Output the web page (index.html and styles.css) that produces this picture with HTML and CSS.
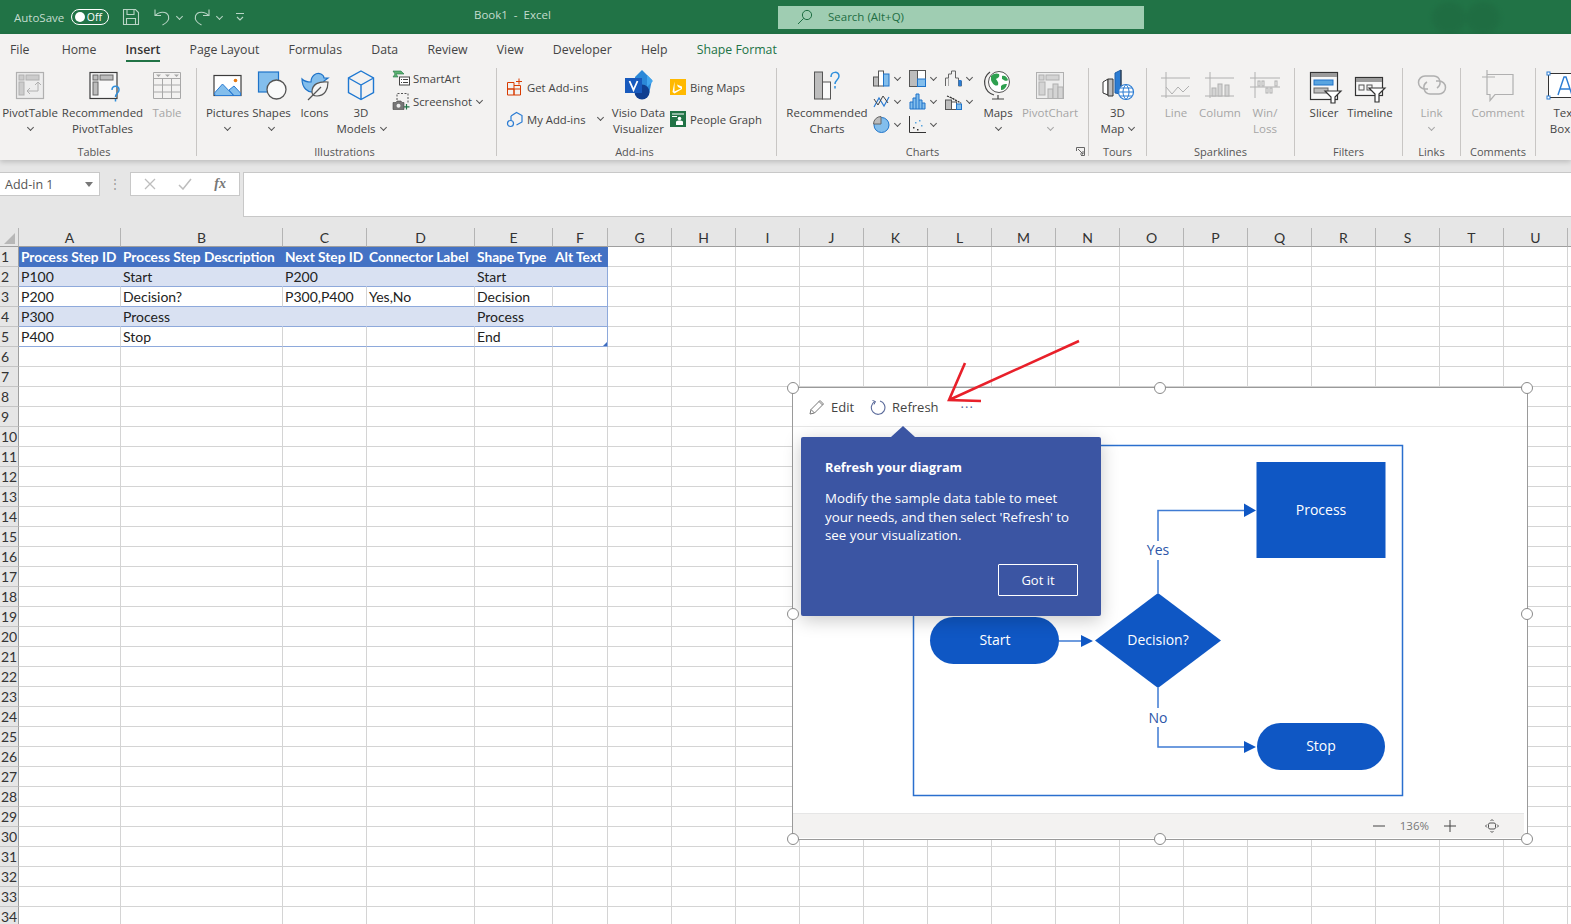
FILE: index.html
```html
<!DOCTYPE html>
<html>
  <head>
    <title>Book1 - Excel</title>
    <link rel="stylesheet" href="styles.css">
  </head>

  <body>
    <div class="titlebar">
      <span class="autosave">AutoSave</span>
      <span class="toggle"><i class="toggle-dot"></i>Off</span>
      <svg class="qat qat-save" width="18" height="18" viewBox="0 0 18 18"><path d="M1.5 1.5h12l3 3v12h-15zM5 1.5v5h7v-5M4.5 16.5v-6h9v6"/></svg>
      <svg class="qat qat-undo" width="18" height="18" viewBox="0 0 18 18"><path d="M2 1.5v6h6M2.5 7.5C6 3 14 3 15.5 8c1 4-2 7-6 9"/></svg>
      <i class="chev chev-title"></i>
      <svg class="qat qat-redo" width="18" height="18" viewBox="0 0 18 18"><path d="M16 1.5v6h-6M15.5 7.5C12 3 4 3 2.5 8c-1 4 2 7 6 9"/></svg>
      <i class="chev chev-title"></i>
      <svg class="qat qat-more" width="10" height="10" viewBox="0 0 10 10"><path d="M1 1.5h8M2 5l3 3 3-3"/></svg>
      <span class="doc-title">Book1&nbsp; -&nbsp; Excel</span>
      <div class="search">
        <svg width="16" height="16" viewBox="0 0 16 16"><circle cx="10" cy="6" r="4.6"/><path d="M6.7 9.3L1 15"/></svg>
        <span>Search (Alt+Q)</span>
      </div>
      <div class="profile"><i></i><i></i></div>
    </div>

    <div class="ribbon">
      <div class="tabs">
        <span class="tab tab-file">File</span>
        <span class="tab">Home</span>
        <span class="tab tab-active">Insert</span>
        <span class="tab">Page Layout</span>
        <span class="tab">Formulas</span>
        <span class="tab">Data</span>
        <span class="tab">Review</span>
        <span class="tab">View</span>
        <span class="tab">Developer</span>
        <span class="tab">Help</span>
        <span class="tab tab-shape">Shape Format</span>
      </div>

      <div class="groups">
        <section class="group group-tables">
          <div class="group-body">
            <div class="big">
              <svg width="32" height="32" viewBox="0 0 32 32"><rect x="2.5" y="3.5" width="27" height="26" fill="#ededed" stroke="#b0b0b0" stroke-width="1.2"/><g fill="#ccc" stroke="#b0b0b0"><rect x="5" y="6" width="5" height="5"/><rect x="12" y="6" width="13" height="5"/><rect x="5" y="13" width="5" height="13"/></g><path d="M24 13v9H13M21 16l3-3 3 3M16 19l-3 3 3 3" fill="none" stroke="#b0b0b0"/></svg>
              <span>PivotTable</span><i class="chev"></i>
            </div>
            <div class="big">
              <svg width="32" height="32" viewBox="0 0 32 32"><rect x="3" y="3.5" width="27" height="26" fill="#f8f8f8" stroke="#3c3c3c" stroke-width="1.2"/><g fill="#bdbdbd" stroke="#666"><rect x="6" y="6" width="5" height="5"/><rect x="13" y="6" width="13" height="5"/><rect x="6" y="13" width="5" height="13"/></g><path d="M25 21c0-5 7-5 7 0 0 3-3.5 3-3.5 7M28.5 30v2.5" fill="none" stroke="#2f8fdc" stroke-width="1.5"/></svg>
              <span>Recommended</span><span>PivotTables</span>
            </div>
            <div class="big off">
              <svg width="32" height="32" viewBox="0 0 32 32"><path d="M2.5 3.5h27v26h-27zM2.5 9.5h27M2.5 16h27M2.5 23h27M11.5 9.5v20M20.5 9.5v20" fill="none" stroke="#a8a8a8"/><path d="M5 5.5h5l-2.5 2.500zM14 5.500h5l-2.500 2.500zM23 5.500h5l-2.500 2.500z" fill="#a8a8a8"/></svg>
              <span>Table</span>
            </div>
          </div>
          <div class="group-label">Tables</div>
        </section>

        <section class="group group-illustrations">
          <div class="group-body">
            <div class="big">
              <svg width="32" height="32" viewBox="0 0 32 32"><rect x="2" y="6.5" width="27" height="20" fill="#fff" stroke="#3c3c3c" stroke-width="1.2"/><path d="M2.5 24l8-9 11 11.5H3zM17 21l5-4 6.500 7v2.500H22z" fill="#83beec" stroke="#2b7cd3"/><circle cx="23.5" cy="11.5" r="1.8" fill="#e8790f"/></svg>
              <span>Pictures</span><i class="chev"></i>
            </div>
            <div class="big">
              <svg width="32" height="32" viewBox="0 0 32 32"><rect x="2.5" y="3" width="20" height="20" fill="#83beec" stroke="#1e73c9" stroke-width="1.2"/><circle cx="20.5" cy="20.5" r="9.5" fill="#fafafa" stroke="#555" stroke-width="1.3"/></svg>
              <span>Shapes</span><i class="chev"></i>
            </div>
            <div class="big">
              <svg width="32" height="32" viewBox="0 0 32 32"><path d="M3 10c3 3 6 3 9 3 0-6 5-10 10-8 2 1 3 3 3 4h4l-4 3c-1 6-4 10-10 11C9 24 3 19 3 10z" fill="#83beec" stroke="#1e73c9" stroke-width="1.2"/><path d="M29 13c-9-1-16 2-16 10 0 3 2 4 5 4 8 0 11-7 11-14z" fill="#f4f4f4" stroke="#555" stroke-width="1.2"/><path d="M9 31l13-13" stroke="#555" stroke-width="1.2"/></svg>
              <span>Icons</span>
            </div>
            <div class="big">
              <svg width="32" height="32" viewBox="0 0 32 32"><path d="M16 2l12.5 7v14.5L16 30.5 3.5 23.5V9zM3.5 9L16 16l12.5-7M16 16v14.5" fill="none" stroke="#1e78d2" stroke-width="1.4"/></svg>
              <span>3D</span><span>Models <i class="chev chev-inline"></i></span>
            </div>
            <div class="small-col">
              <div class="small">
                <svg width="18" height="18" viewBox="0 0 18 18"><path d="M1 2h8l3 3H4l2 3-5 0 2-3z" fill="#5cb270" stroke="#217346" stroke-width=".6"/><rect x="7.5" y="8" width="10" height="8" fill="#fff" stroke="#444"/><path d="M9 10.5h1M11 10.5h5M9 13.5h1M11 13.5h5" stroke="#444"/></svg>
                <span>SmartArt</span>
              </div>
              <div class="small">
                <svg width="18" height="18" viewBox="0 0 18 18"><path d="M5 8V1.5h11V11" fill="none" stroke="#555" stroke-dasharray="2 1.5"/><path d="M1 10.5h3l1-1.5h4l1 1.5h2v7H1z" fill="#777" stroke="#444" stroke-width=".6"/><circle cx="6.5" cy="13.8" r="2" fill="#eee"/><path d="M14.5 12v5.500M12 14.800h5.500" stroke="#217346" stroke-width="1.2"/></svg>
                <span>Screenshot <i class="chev chev-inline"></i></span>
              </div>
            </div>
          </div>
          <div class="group-label">Illustrations</div>
        </section>

        <section class="group group-addins">
          <div class="group-body">
            <div class="small-col">
              <div class="small">
                <svg width="18" height="18" viewBox="0 0 18 18"><path d="M1.5 4.5H8V11H1.5zM8 11h6.500v6H8zM1.500 11H8v6H1.500zM8 7.500h6.500V11" fill="none" stroke="#d83b01"/><path d="M13 .5v6M10 3.500h6" stroke="#d83b01"/></svg>
                <span>Get Add-ins</span>
              </div>
              <div class="small">
                <svg width="18" height="18" viewBox="0 0 18 18"><path d="M5 6l5.500-3.500L16 5.500v6.500l-5.500 3" fill="none" stroke="#2b7cd3" stroke-width="1.2"/><path d="M5 6v5" stroke="#2b7cd3" stroke-width="1.2"/><circle cx="4.5" cy="13.5" r="3" fill="#f3f2f1" stroke="#2b7cd3" stroke-width="1.2"/></svg>
                <span>My Add-ins</span><i class="chev chev-myaddins"></i>
              </div>
            </div>
            <div class="big">
              <svg width="32" height="32" viewBox="0 0 32 32"><path d="M19 1l10 10-3 14H12V8z" fill="#2b88d8"/><path d="M24 6l6 6-6 6z" fill="#41a5ee"/><circle cx="19" cy="23" r="7.5" fill="#103f91"/><rect x="2" y="9" width="17" height="15" fill="#185abd"/><path d="M6.500 12l4 9 4-9" fill="none" stroke="#fff" stroke-width="1.8"/></svg>
              <span>Visio Data</span><span>Visualizer</span>
            </div>
            <div class="small-col">
              <div class="small">
                <svg width="18" height="18" viewBox="0 0 18 18"><rect x="1" y="1" width="16" height="16" fill="#ffb900"/><path d="M5.500 3.500v10l6.500-3-3-1.500-1-2.500 5 2v2.500l-7.500 4.500-2-1.500" fill="#fff"/></svg>
                <span>Bing Maps</span>
              </div>
              <div class="small">
                <svg width="18" height="18" viewBox="0 0 18 18"><rect x="1" y="1" width="16" height="16" fill="#217346"/><path d="M3 4h12M3 6.500h5" stroke="#fff"/><circle cx="10.5" cy="8.5" r="1.8" fill="#fff"/><path d="M7 15v-3.500l2-1h3l2 1V15z" fill="#fff"/></svg>
                <span>People Graph</span>
              </div>
            </div>
          </div>
          <div class="group-label">Add-ins</div>
        </section>

        <section class="group group-charts">
          <div class="group-body">
            <div class="big">
              <svg width="32" height="32" viewBox="0 0 32 32"><rect x="3.5" y="3" width="8" height="27" fill="#bdbdbd" stroke="#555"/><rect x="11.5" y="13" width="8" height="17" fill="#fafafa" stroke="#555"/><path d="M20 8c0-6 8-6 8-1 0 4-4 4-4 8M24 17v2.500" fill="none" stroke="#2f8fdc" stroke-width="1.5"/></svg>
              <span>Recommended</span><span>Charts</span>
            </div>
            <div class="chart-grid">
              <div class="chart-cell"><svg width="17" height="17" viewBox="0 0 17 17"><rect x=".5" y="7" width="5" height="9" fill="#bdbdbd" stroke="#555"/><rect x="5.5" y="1" width="5" height="15" fill="#fff" stroke="#555"/><rect x="10.5" y="4" width="5.5" height="12" fill="#83beec" stroke="#1e73c9"/></svg><i class="chev"></i></div>
              <div class="chart-cell"><svg width="17" height="17" viewBox="0 0 17 17"><rect x=".5" y=".5" width="16" height="16" fill="#fff" stroke="#555"/><rect x=".5" y=".5" width="8" height="16" fill="#bdbdbd" stroke="#555"/><rect x="8.5" y="9" width="8" height="7.5" fill="#83beec" stroke="#1e73c9"/></svg><i class="chev"></i></div>
              <div class="chart-cell"><svg width="17" height="17" viewBox="0 0 17 17"><path d="M.5 16V8h3V4h3V1h4v7h3v8h3v-5" fill="none" stroke="#666"/><rect x="13.5" y="10" width="3" height="6" fill="#2b7cd3"/><path d="M3.5 8v8" stroke="#aaa"/></svg><i class="chev"></i></div>
              <div class="chart-cell"><svg width="17" height="17" viewBox="0 0 17 17"><path d="M1 14L6 5l5 8 5-9" fill="none" stroke="#2b7cd3" stroke-width="1.2"/><path d="M1 6l4 6 5-9 5 7" fill="none" stroke="#444"/></svg><i class="chev"></i></div>
              <div class="chart-cell"><svg width="17" height="17" viewBox="0 0 17 17"><path d="M1 16V9h3V5h3V1h3v6h3v3h3v6z" fill="#83beec" stroke="#1e73c9"/><path d="M4 9v7M7 5v11M10 7v9M13 10v6" stroke="#1e73c9"/></svg><i class="chev"></i></div>
              <div class="chart-cell"><svg width="17" height="17" viewBox="0 0 17 17"><rect x=".5" y="7" width="6" height="9.5" fill="#bdbdbd" stroke="#555"/><rect x="6.5" y="9" width="5" height="7.5" fill="#fff" stroke="#555"/><rect x="11.5" y="11" width="5" height="5.5" fill="#83beec" stroke="#1e73c9"/><path d="M2 3l5 2 5 3 4 2" stroke="#333" stroke-width="1.3" stroke-dasharray="2 1"/></svg><i class="chev"></i></div>
              <div class="chart-cell"><svg width="17" height="17" viewBox="0 0 17 17"><circle cx="8.5" cy="9" r="7.5" fill="#83beec" stroke="#1e73c9"/><path d="M8 8V.5A7.5 7.5 0 0 0 .5 8z" fill="#bdbdbd" stroke="#666"/></svg><i class="chev"></i></div>
              <div class="chart-cell"><svg width="17" height="17" viewBox="0 0 17 17"><path d="M.5 0v16.500H17" fill="none" stroke="#333"/><g fill="#5aa5e0"><rect x="6" y="6" width="1.5" height="1.5"/><rect x="10" y="4" width="1.5" height="1.5"/><rect x="12" y="9" width="1.5" height="1.5"/></g><g fill="#333"><rect x="4" y="11" width="1.5" height="1.5"/><rect x="8" y="13" width="1.5" height="1.5"/></g></svg><i class="chev"></i></div>
            </div>
            <div class="big">
              <svg width="32" height="32" viewBox="0 0 32 32"><circle cx="17" cy="13" r="10.5" fill="#fff" stroke="#555"/><path d="M9 7c3-3 6-3 8-2 1 3-1 4-3 5 1 2 3 3 2 6-3 2-6-2-7-5zM20 7c3-1 5 1 6 4-2 2-4 0-6-1zM19 17c2-2 4-2 6-2-1 4-3 6-6 6z" fill="#2ea04f"/><path d="M8 3a13 13 0 0 0 4 23M16 26v4M10 30h12" fill="none" stroke="#444" stroke-width="1.2"/></svg>
              <span>Maps</span><i class="chev"></i>
            </div>
            <div class="big off">
              <svg width="32" height="32" viewBox="0 0 32 32"><rect x="2.5" y="3.5" width="27" height="26" fill="#ededed" stroke="#b0b0b0"/><g fill="#d4d4d4" stroke="#b0b0b0"><rect x="5" y="6" width="5" height="5"/><rect x="12" y="6" width="13" height="5"/><rect x="5" y="13" width="6" height="13"/><rect x="14" y="20" width="5" height="9.5"/><rect x="19" y="15" width="5" height="14.5"/><rect x="24" y="18" width="5" height="11.5"/></g></svg>
              <span>PivotChart</span><i class="chev"></i>
            </div>
          </div>
          <div class="group-label">Charts</div>
          <svg class="launcher" width="9" height="9" viewBox="0 0 9 9"><path d="M.5 4V.5h8v8H5M2 2l5 5M4 7h3V4" fill="none" stroke="#666"/></svg>
        </section>

        <section class="group group-tours">
          <div class="group-body">
            <div class="big">
              <svg width="32" height="32" viewBox="0 0 32 32"><path d="M1 13l5-3v16l-5-2z" fill="#fff" stroke="#333"/><path d="M6 10h5v17H6z" fill="#bdbdbd" stroke="#333"/><path d="M13 4l6-3v24l-6-1z" fill="#2b7cd3" stroke="#1e5fa8"/><path d="M19 1v24" stroke="#333"/><circle cx="24" cy="23" r="7.5" fill="#fff" stroke="#2b7cd3" stroke-width="1.2"/><path d="M16.500 23h15M24 15.500c-4 4-4 11 0 15M24 15.500c4 4 4 11 0 15M18 19h12M18 27h12" fill="none" stroke="#2b7cd3"/></svg>
              <span>3D</span><span>Map <i class="chev chev-inline"></i></span>
            </div>
          </div>
          <div class="group-label">Tours</div>
        </section>

        <section class="group group-sparklines">
          <div class="group-body">
            <div class="big off">
              <svg width="32" height="32" viewBox="0 0 32 32"><path d="M1 9h29M1 27h29M6 3v26" fill="none" stroke="#b0b0b0"/><path d="M6 18l6 7 6-7 5 5 6-6" fill="none" stroke="#b0b0b0"/></svg>
              <span>Line</span>
            </div>
            <div class="big off">
              <svg width="32" height="32" viewBox="0 0 32 32"><path d="M1 9h29M1 27h29M6 3v26" fill="none" stroke="#b0b0b0"/><g fill="#d4d4d4" stroke="#b0b0b0"><rect x="8" y="19" width="4" height="8"/><rect x="14" y="15" width="4" height="12"/><rect x="21" y="16" width="4" height="11"/></g></svg>
              <span>Column</span>
            </div>
            <div class="big off">
              <svg width="32" height="32" viewBox="0 0 32 32"><path d="M1 18h30M6 3v26M1 9h30" fill="none" stroke="#b0b0b0"/><g fill="none" stroke="#b0b0b0"><rect x="9" y="12" width="2" height="5"/><rect x="13" y="12" width="2" height="5"/><rect x="17" y="19" width="2" height="5"/><rect x="21" y="19" width="2" height="5"/><rect x="26" y="12" width="2" height="5"/></g></svg>
              <span>Win/</span><span>Loss</span>
            </div>
          </div>
          <div class="group-label">Sparklines</div>
        </section>

        <section class="group group-filters">
          <div class="group-body">
            <div class="big">
              <svg width="32" height="32" viewBox="0 0 32 32"><rect x="2.5" y="3.5" width="27" height="27" fill="#f8f8f8" stroke="#333" stroke-width="1.2"/><rect x="3" y="4" width="26" height="4" fill="#9a9a9a"/><rect x="6" y="11" width="19" height="5" fill="#5aa5e0" stroke="#1e73c9"/><rect x="6" y="19" width="14" height="5" fill="#bdbdbd" stroke="#666"/><path d="M17 22h16l-6 6v6h-4v-6z" fill="#fff" stroke="#333" stroke-width="1.2"/></svg>
              <span>Slicer</span>
            </div>
            <div class="big">
              <svg width="32" height="32" viewBox="0 0 32 32"><rect x="1.5" y="8.5" width="27" height="18" fill="#f8f8f8" stroke="#333" stroke-width="1.2"/><rect x="2" y="9" width="26" height="4" fill="#9a9a9a"/><g fill="none" stroke="#555"><rect x="5" y="16" width="5" height="5"/><rect x="13" y="16" width="5" height="5"/></g><path d="M15 19h16l-6 6v8h-4v-8z" fill="#fff" stroke="#333" stroke-width="1.2"/></svg>
              <span>Timeline</span>
            </div>
          </div>
          <div class="group-label">Filters</div>
        </section>

        <section class="group group-links">
          <div class="group-body">
            <div class="big off">
              <svg width="32" height="32" viewBox="0 0 32 32"><path d="M12 20H9a6.500 6.500 0 0 1 0-13h9a6.500 6.500 0 0 1 3 12" fill="none" stroke="#b0b0b0" stroke-width="1.5"/><path d="M20 12h3a6.500 6.500 0 0 1 0 13h-9a6.500 6.500 0 0 1-3-12" fill="none" stroke="#b0b0b0" stroke-width="1.5"/></svg>
              <span>Link</span><i class="chev"></i>
            </div>
          </div>
          <div class="group-label">Links</div>
        </section>

        <section class="group group-comments">
          <div class="group-body">
            <div class="big off">
              <svg width="32" height="32" viewBox="0 0 32 32"><path d="M5 5.500h26v20H13l-5 6v-6H5zM5 11V1M0 8h13" fill="none" stroke="#b0b0b0" stroke-width="1.2"/></svg>
              <span>Comment</span>
            </div>
          </div>
          <div class="group-label">Comments</div>
        </section>

        <section class="group-text">
          <div class="big">
            <svg width="32" height="32" viewBox="0 0 32 32"><rect x="4.500" y="4.500" width="30" height="24" fill="#fff" stroke="#333"/><path d="M14 26l6-18h2l6 18M16.500 20h9" fill="none" stroke="#2b7cd3" stroke-width="1.4"/><rect x="3" y="3" width="3" height="3" fill="#fff" stroke="#2b7cd3"/><rect x="3" y="27" width="3" height="3" fill="#fff" stroke="#2b7cd3"/></svg>
            <span class="text-first">Text</span><span>Box</span>
          </div>
        </section>
      </div>
    </div>

    <div class="formula-bar">
      <div class="name-box"><span>Add-in 1</span><i></i></div>
      <div class="formula-grip">⋮</div>
      <div class="formula-buttons">
        <svg width="12" height="12" viewBox="0 0 12 12"><path d="M1 1l10 10M11 1L1 11" stroke="#bdbdbd" stroke-width="1.3"/></svg>
        <svg width="14" height="12" viewBox="0 0 14 12"><path d="M1 7l4 4 8-10" fill="none" stroke="#bdbdbd" stroke-width="1.5"/></svg>
        <span class="fx">fx</span>
      </div>
      <div class="formula-input"></div>
    </div>

    <div class="sheet">
      <table class="cells" id="cells"></table>
    </div>

    <div class="addin">
      <div class="addin-toolbar">
        <span class="tool">
          <svg width="16" height="16" viewBox="0 0 16 16"><path d="M1 15l1-4.500L11 1.500l3.500 3.500-9 9zM2 10.500L5.500 14M10 2.500L13.500 6" fill="none" stroke="#777"/></svg>
          Edit
        </span>
        <span class="tool">
          <svg width="16" height="16" viewBox="0 0 16 16"><path d="M5 2.500A6.800 6.800 0 1 0 10 2" fill="none" stroke="#5a6a9a" stroke-width="1.1"/><path d="M2.500 1.500L5.500 2.500 4 5.500" fill="none" stroke="#5a6a9a"/></svg>
          Refresh
        </span>
        <span class="tool-more">···</span>
      </div>

      <svg class="flow" width="733" height="386" viewBox="793 426 733 386">
        <rect x="913.5" y="445.5" width="489" height="350" fill="none" stroke="#2a6fce" stroke-width="1.5"/>
        <path class="link-line" d="M1158 593V510.500H1244M1059 641H1081M1158 688V747H1244"/>
        <path class="link-head" d="M1244 503.500L1256 510.500 1244 517zM1081 635L1093 641 1081 647zM1244 741L1256 747 1244 753z"/>
        <rect class="shape" x="1256.5" y="462" width="129" height="96"/>
        <rect class="shape" x="930" y="617" width="129" height="47" rx="23.5"/>
        <path class="shape" d="M1158 593L1221 640.500 1158 688 1095 640.500z"/>
        <rect class="shape" x="1257" y="723" width="128" height="47" rx="23.5"/>
        <rect x="1146" y="541" width="24" height="19" fill="#fff"/>
        <rect x="1146" y="708" width="24" height="19" fill="#fff"/>
        <text class="flow-text" x="1321" y="515">Process</text>
        <text class="flow-text" x="995" y="645">Start</text>
        <text class="flow-text" x="1158" y="645">Decision?</text>
        <text class="flow-text" x="1321" y="751">Stop</text>
        <text class="flow-label" x="1158" y="555">Yes</text>
        <text class="flow-label" x="1158" y="723">No</text>
      </svg>

      <div class="addin-status">
        <svg width="12" height="12" viewBox="0 0 12 12"><path d="M0 6h12" stroke="#444"/></svg>
        <span class="zoom-value">136%</span>
        <svg width="12" height="12" viewBox="0 0 12 12"><path d="M0 6h12M6 0v12" stroke="#444"/></svg>
        <svg class="fit" width="14" height="14" viewBox="0 0 14 14"><rect x="3.500" y="4" width="7" height="6" rx="1.500" fill="none" stroke="#555"/><path d="M5.500 2L7 .5 8.500 2M5.500 12L7 13.500 8.500 12M2 5.500L.5 7 2 8.500M12 5.500L13.500 7 12 8.500" fill="none" stroke="#555"/></svg>
      </div>

      <div class="coachmark">
        <h2>Refresh your diagram</h2>
        <p>Modify the sample data table to meet your needs, and then select 'Refresh' to see your visualization.</p>
        <button>Got it</button>
      </div>

      <span class="handle h-tl"></span>
      <span class="handle h-tc"></span>
      <span class="handle h-tr"></span>
      <span class="handle h-ml"></span>
      <span class="handle h-mr"></span>
      <span class="handle h-bl"></span>
      <span class="handle h-bc"></span>
      <span class="handle h-br"></span>
    </div>

    <svg class="red-arrow" width="140" height="70" viewBox="0 0 140 70">
      <path d="M132 3L2 62M18 25L2 62 34 63" fill="none" stroke="#e8202a" stroke-width="2.6"/>
    </svg>

    <script src="grid.js"></script>
  </body>
</html>
```

FILE: styles.css
```css
* {
  box-sizing: border-box;
}

html,
body {
  height: 100%;
}

body {
  margin: 0;
  overflow: hidden;
  display: flex;
  flex-direction: column;
  background-color: #e6e6e6;
  font-family: "Open Sans", "Noto Sans", sans-serif;
  font-size: 12px;
  color: #444;
}

/* title bar */
.titlebar {
  flex: none;
  height: 34px;
  position: relative;
  display: flex;
  align-items: center;
  padding-left: 14px;
  background-color: #217346;
  color: #c4dccf;
}

.autosave {
  width: 57px;
  font-size: 11.5px;
}

.toggle {
  width: 38px;
  height: 16px;
  display: flex;
  align-items: center;
  justify-content: flex-end;
  padding-right: 6px;
  border: 1px solid #fff;
  border-radius: 8px;
  color: #fff;
  font-size: 10.5px;
  position: relative;
}

.toggle-dot {
  position: absolute;
  left: 3px;
  top: 2px;
  width: 10px;
  height: 10px;
  border-radius: 50%;
  background-color: #fff;
}

.qat {
  fill: none;
  stroke: #b9d5c6;
  stroke-width: 1.1;
}

.qat-save {
  margin-left: 13px;
}

.qat-undo {
  margin-left: 13px;
}

.qat-redo {
  margin-left: 11px;
}

.qat-more {
  margin-left: 13px;
}

.doc-title {
  position: absolute;
  left: 474px;
  top: 7px;
  font-size: 11.5px;
}

.search {
  position: absolute;
  left: 778px;
  top: 6px;
  width: 366px;
  height: 23px;
  display: flex;
  align-items: center;
  gap: 15px;
  padding: 0 0 2px 19px;
  background-color: #9fcdb2;
  color: #1e6e43;
  font-size: 11.5px;
}

.search svg {
  fill: none;
  stroke: #1e6e43;
}

.profile {
  position: absolute;
  left: 1432px;
  top: 2px;
  display: flex;
  filter: blur(2px);
  opacity: 0.6;
}

.profile i {
  width: 34px;
  height: 32px;
  border-radius: 50%;
  background-color: #1f6a41;
}

/* ribbon */
.ribbon {
  flex: none;
  height: 126px;
  background-color: #f3f2f1;
  box-shadow: 0 2px 5px rgba(0, 0, 0, 0.18);
  position: relative;
  overflow: hidden;
}

.tabs {
  height: 32px;
  display: flex;
  gap: 29.2px;
  padding-left: 10px;
  font-size: 12.3px;
  color: #444;
}

.tab {
  position: relative;
  line-height: 31px;
}

.tab-file {
  margin-right: 3px;
}

.tab-active {
  color: #333;
  font-weight: 600;
}

.tab-active::after {
  content: "";
  position: absolute;
  left: 0;
  right: 0;
  top: 26px;
  height: 2px;
  background-color: #217346;
}

.tab-shape {
  color: #217346;
}

.groups {
  display: flex;
  padding-top: 2px;
}

.group {
  flex: none;
  height: 88px;
  position: relative;
  border-right: 1px solid #c8c6c4;
}

.group-body {
  height: 76px;
  display: grid;
  grid-auto-flow: column;
  justify-content: start;
  padding-top: 1px;
}

.group-label {
  text-align: center;
  line-height: 16px;
  font-size: 11px;
  color: #555;
  white-space: nowrap;
}

.group-tables {
  width: 197px;
}

.group-tables .group-label {
  padding-right: 8px;
}

.group-tables .group-body {
  grid-template-columns: 60px 85px 44px;
}

.group-illustrations {
  width: 300px;
}

.group-illustrations .group-label,
.group-addins .group-label {
  padding-right: 4px;
}

.group-illustrations .group-body {
  padding-left: 8px;
  grid-template-columns: 45px 43px 43px 50px auto;
}

.group-illustrations .small-col {
  padding-left: 6px;
}

.group-addins {
  width: 280px;
}

.group-addins .group-body {
  padding-left: 9px;
  grid-template-columns: 106px 53px auto;
}

.group-addins .small-col {
  padding-top: 9px;
  gap: 14px;
}

.group-addins .group-body > .small-col:last-child {
  padding-left: 4px;
}

.group-charts {
  width: 312px;
}

.group-charts .group-label {
  padding-right: 20px;
}

.group-charts .group-body {
  padding-left: 8px;
  grid-template-columns: 84px 112px 34px 70px;
}

.group-tours {
  width: 58px;
}

.group-tours .group-body {
  grid-template-columns: 57px;
}

.group-sparklines {
  width: 148px;
}

.group-sparklines .group-body {
  padding-left: 7px;
  grid-template-columns: 44px 44px 46px;
}

.group-filters {
  width: 108px;
}

.group-filters .group-body {
  padding-left: 5px;
  grid-template-columns: 48px 44px;
}

.group-links {
  width: 58px;
}

.group-links .group-body {
  grid-template-columns: 57px;
}

.group-comments {
  width: 75px;
}

.group-comments .group-body {
  grid-template-columns: 74px;
}

.group-text {
  flex: none;
  width: 48px;
  padding-top: 1px;
}

.text-first {
  margin-left: 10px;
}

.big {
  display: flex;
  flex-direction: column;
  align-items: center;
  line-height: 16px;
  white-space: nowrap;
  font-size: 11.5px;
}

.big svg {
  overflow: visible;
  margin-bottom: 4px;
}

.off {
  color: #a6a6a6;
}

.chev {
  display: block;
  width: 5px;
  height: 5px;
  margin-top: 4px;
  border-right: 1px solid #555;
  border-bottom: 1px solid #555;
  transform: rotate(45deg);
}

.off .chev {
  border-color: #a6a6a6;
}

.chev-inline {
  display: inline-block;
  margin: 0 0 3px 2px;
}

.chev-title {
  margin: 0 0 2px 6px;
  border-color: #b9d5c6;
}

.chev-myaddins {
  margin: 0 0 3px 9px;
}

.small-col {
  display: flex;
  flex-direction: column;
  gap: 5px;
}

.small {
  display: flex;
  align-items: center;
  gap: 3px;
  height: 18px;
  white-space: nowrap;
  font-size: 11.3px;
}

.chart-grid {
  display: grid;
  grid-template-columns: repeat(3, 36px);
  grid-auto-rows: 23px;
  padding-left: 4px;
  margin-top: -2px;
}

.chart-cell {
  display: flex;
  align-items: center;
  gap: 5px;
}

.chart-cell .chev {
  margin-top: -2px;
}

.launcher {
  position: absolute;
  right: 3px;
  bottom: 0;
}

/* formula bar */
.formula-bar {
  flex: none;
  height: 68px;
  padding-top: 12px;
  display: flex;
  align-items: flex-start;
  background-color: #e6e6e6;
}

.name-box {
  width: 100px;
  height: 24px;
  display: flex;
  align-items: center;
  justify-content: space-between;
  padding: 0 6px 0 5px;
  background-color: #fff;
  border: 1px solid #c8c8c8;
  border-left: 0;
  font-size: 12.5px;
  color: #555;
}

.name-box i {
  border-left: 4px solid transparent;
  border-right: 4px solid transparent;
  border-top: 5px solid #777;
}

.formula-grip {
  width: 30px;
  line-height: 24px;
  text-align: center;
  color: #999;
}

.formula-buttons {
  width: 110px;
  height: 24px;
  display: flex;
  align-items: center;
  justify-content: space-between;
  padding: 0 13px;
  background-color: #fff;
  border: 1px solid #c8c8c8;
}

.fx {
  font-family: "Liberation Serif", serif;
  font-style: italic;
  font-weight: bold;
  font-size: 14px;
  color: #777;
}

.formula-input {
  flex: 1;
  height: 45px;
  margin-left: 3px;
  background-color: #fff;
  border: 1px solid #c8c8c8;
  border-right: 0;
}

/* worksheet */
.sheet {
  flex: 1;
  overflow: hidden;
  background-color: #fff;
}

.cells {
  table-layout: fixed;
  border-collapse: separate;
  border-spacing: 0;
  width: 1571px;
  font-family: Lato, "Liberation Sans", sans-serif;
  font-size: 14px;
  color: #222;
}

.cells th {
  height: 19px;
  padding: 0;
  font-weight: normal;
  text-align: center;
  background-color: #e6e6e6;
  border-right: 1px solid #b4b4b4;
  border-bottom: 1px solid #9f9f9f;
  color: #333;
}

.cells td {
  height: 20px;
  padding: 0 0 0 2px;
  white-space: nowrap;
  overflow: hidden;
  border-right: 1px solid #d4d4d4;
  border-bottom: 1px solid #d4d4d4;
  position: relative;
}

.cells th.row-head {
  height: 20px;
  text-align: left;
  padding: 0 0 0 1px;
  border-right-color: #9f9f9f;
  border-bottom-color: #c4c4c4;
}

.corner {
  display: block;
  width: 0;
  height: 0;
  margin: 2px 0 0 4px;
  border-left: 11px solid transparent;
  border-bottom: 11px solid #b7b7b7;
}

.cells td.tbl-head {
  background-color: #4472c4;
  color: #fff;
  font-weight: bold;
  font-size: 13.7px;
  border-right-color: #4472c4;
  border-bottom-color: #4472c4;
}

.cells td.band {
  background-color: #d9e1f2;
  border-right-color: #d9e1f2;
  border-bottom-color: #8ea9db;
}

.cells td.plain {
  border-bottom-color: #8ea9db;
}

.cells td.tbl-end {
  border-right-color: #8ea9db;
}

.cells td.tbl-corner::after {
  content: "";
  position: absolute;
  right: 0;
  bottom: 0;
  border-left: 4px solid transparent;
  border-bottom: 4px solid #3d6cc0;
}

/* visio add-in, floats over the sheet */
.addin {
  position: absolute;
  left: 792px;
  top: 387px;
  width: 736px;
  height: 453px;
  background-color: #fff;
  border: 1.5px solid #9a9a9a;
}

.addin-toolbar {
  height: 39px;
  display: flex;
  align-items: center;
  padding-left: 16px;
  gap: 16px;
  border-bottom: 1px solid #e6e6e6;
  font-size: 13px;
  color: #444;
}

.tool {
  display: flex;
  align-items: center;
  gap: 6px;
}

.tool-more {
  margin-left: 6px;
  color: #5a6a9a;
  letter-spacing: 1px;
}

.flow {
  display: block;
  position: absolute;
  left: 0;
  top: 38px;
}

.link-line {
  fill: none;
  stroke: #3f7bd3;
  stroke-width: 1.5;
}

.link-head,
.shape {
  fill: #0f57c4;
}

.flow-text {
  fill: #fff;
  font-size: 14px;
  text-anchor: middle;
}

.flow-label {
  fill: #2d56a8;
  font-size: 14px;
  text-anchor: middle;
}

.addin-status {
  position: absolute;
  left: 0;
  right: 3px;
  bottom: 1.5px;
  height: 25px;
  display: flex;
  align-items: center;
  justify-content: flex-end;
  gap: 15px;
  padding-right: 25px;
  background-color: #f3f2f1;
  border-top: 1px solid #e6e6e6;
  font-size: 11.5px;
  color: #777;
}

.fit {
  margin-left: 14px;
}

.coachmark {
  position: absolute;
  left: 8px;
  top: 49px;
  width: 300px;
  height: 179px;
  padding: 21px 24px;
  background-color: #3b55a3;
  border-radius: 2px;
  box-shadow: 0 4px 18px rgba(0, 0, 0, 0.22);
  color: #fff;
  font-size: 13.3px;
}

.coachmark::before {
  content: "";
  position: absolute;
  left: 90px;
  top: -11px;
  border-left: 12px solid transparent;
  border-right: 12px solid transparent;
  border-bottom: 11px solid #3b55a3;
}

.coachmark h2 {
  margin: 0 0 13px;
  font-size: 12.7px;
  line-height: 18px;
  font-weight: 700;
}

.coachmark p {
  margin: 0;
  line-height: 18.5px;
}

.coachmark button {
  position: absolute;
  right: 23px;
  bottom: 20px;
  width: 80px;
  height: 32px;
  padding: 0;
  background: transparent;
  border: 1px solid #fff;
  border-radius: 1px;
  color: #fff;
  font-family: inherit;
  font-size: 13px;
}

.handle {
  position: absolute;
  width: 12px;
  height: 12px;
  margin: -6px 0 0 -6px;
  border-radius: 50%;
  background-color: #fff;
  border: 1.5px solid #8a8a8a;
}

.h-tl,
.h-ml,
.h-bl {
  left: 0;
}

.h-tc,
.h-bc {
  left: 50%;
}

.h-tr,
.h-mr,
.h-br {
  left: 100%;
}

.h-tl,
.h-tc,
.h-tr {
  top: 0;
}

.h-ml,
.h-mr {
  top: 50%;
}

.h-bl,
.h-bc,
.h-br {
  top: 100%;
}

.red-arrow {
  position: absolute;
  left: 947px;
  top: 338px;
}
```

FILE: grid.js
```js
const COLUMN_WIDTHS = [19, 102, 162, 84, 108, 78, 55];
const COLUMN_NAMES = "ABCDEFGHIJKLMNOPQRSTU".split("");
const ROW_COUNT = 34;

const tableRows = [
  ["Process Step ID", "Process Step Description", "Next Step ID", "Connector Label", "Shape Type", "Alt Text"],
  ["P100", "Start", "P200", "", "Start", ""],
  ["P200", "Decision?", "P300,P400", "Yes,No", "Decision", ""],
  ["P300", "Process", "", "", "Process", ""],
  ["P400", "Stop", "", "", "End", ""],
];

const cells = document.getElementById("cells");

// column widths
const colgroup = document.createElement("colgroup");
for (let i = 0; i < COLUMN_NAMES.length + 2; i++) {
  const col = document.createElement("col");
  col.style.width = (COLUMN_WIDTHS[i] || 64) + "px";
  colgroup.appendChild(col);
}
cells.appendChild(colgroup);

// column headers
const headRow = document.createElement("tr");
const cornerCell = document.createElement("th");
cornerCell.innerHTML = '<i class="corner"></i>';
headRow.appendChild(cornerCell);
COLUMN_NAMES.concat("").forEach((name) => {
  const th = document.createElement("th");
  th.textContent = name;
  headRow.appendChild(th);
});
cells.appendChild(headRow);

// rows
for (let r = 0; r < ROW_COUNT; r++) {
  const row = document.createElement("tr");
  const rowHead = document.createElement("th");
  rowHead.className = "row-head";
  rowHead.textContent = r + 1;
  row.appendChild(rowHead);

  for (let c = 0; c < COLUMN_NAMES.length + 1; c++) {
    const td = document.createElement("td");
    if (r < tableRows.length && c < 6) {
      td.textContent = tableRows[r][c];
      if (r === 0) td.classList.add("tbl-head");
      else td.classList.add(r % 2 === 1 ? "band" : "plain");
      if (c === 5 && r > 0) td.classList.add("tbl-end");
      if (c === 5 && r === tableRows.length - 1) td.classList.add("tbl-corner");
    }
    row.appendChild(td);
  }
  cells.appendChild(row);
}
```
